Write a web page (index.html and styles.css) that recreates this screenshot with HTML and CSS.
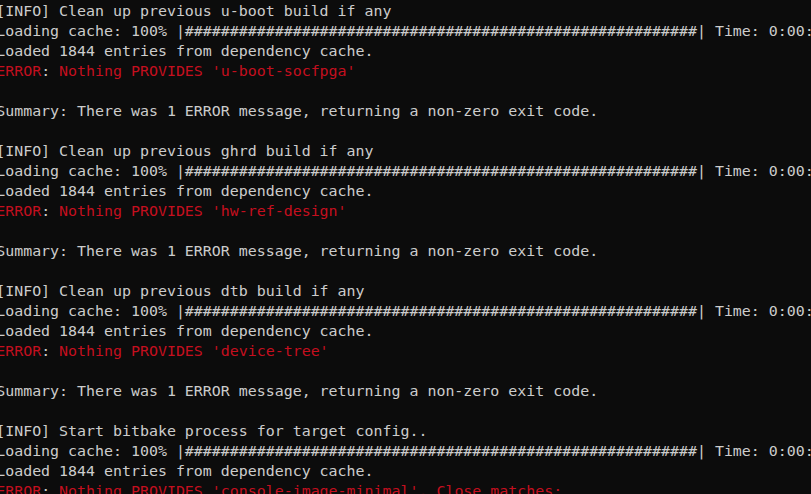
FILE: index.html
```html
<!DOCTYPE html>
<html>
<head>
<meta charset="utf-8">
<link rel="stylesheet" href="styles.css">
</head>
<body>
<div class="term">
<div class="line">[INFO] Clean up previous u-boot build if any</div>
<div class="line">Loading cache: 100% |#########################################################| Time: 0:00:</div>
<div class="line">Loaded 1844 entries from dependency cache.</div>
<div class="line"><span class="err">ERROR</span>:<span class="err"> Nothing PROVIDES 'u-boot-socfpga'</span></div>
<div class="line"> </div>
<div class="line">Summary: There was 1 ERROR message, returning a non-zero exit code.</div>
<div class="line"> </div>
<div class="line">[INFO] Clean up previous ghrd build if any</div>
<div class="line">Loading cache: 100% |#########################################################| Time: 0:00:</div>
<div class="line">Loaded 1844 entries from dependency cache.</div>
<div class="line"><span class="err">ERROR</span>:<span class="err"> Nothing PROVIDES 'hw-ref-design'</span></div>
<div class="line"> </div>
<div class="line">Summary: There was 1 ERROR message, returning a non-zero exit code.</div>
<div class="line"> </div>
<div class="line">[INFO] Clean up previous dtb build if any</div>
<div class="line">Loading cache: 100% |#########################################################| Time: 0:00:</div>
<div class="line">Loaded 1844 entries from dependency cache.</div>
<div class="line"><span class="err">ERROR</span>:<span class="err"> Nothing PROVIDES 'device-tree'</span></div>
<div class="line"> </div>
<div class="line">Summary: There was 1 ERROR message, returning a non-zero exit code.</div>
<div class="line"> </div>
<div class="line">[INFO] Start bitbake process for target config..</div>
<div class="line">Loading cache: 100% |#########################################################| Time: 0:00:</div>
<div class="line">Loaded 1844 entries from dependency cache.</div>
<div class="line"><span class="err">ERROR</span>:<span class="err"> Nothing PROVIDES 'console-image-minimal'. Close matches:</span></div>
</div>
</body>
</html>
```
FILE: styles.css
```css
html, body {
  margin: 0;
  padding: 0;
  background: #0c0c0c;
  overflow: hidden;
  height: 100%;
}
.term {
  margin-left: -3.8px;
  padding-top: 1.2px;
  font-family: "DejaVu Sans Mono", monospace;
  font-size: 14.93px;
  color: #cccccc;
}
.line {
  height: 20px;
  line-height: 20px;
  white-space: pre;
}
.err {
  color: #c50f1f;
}
```
